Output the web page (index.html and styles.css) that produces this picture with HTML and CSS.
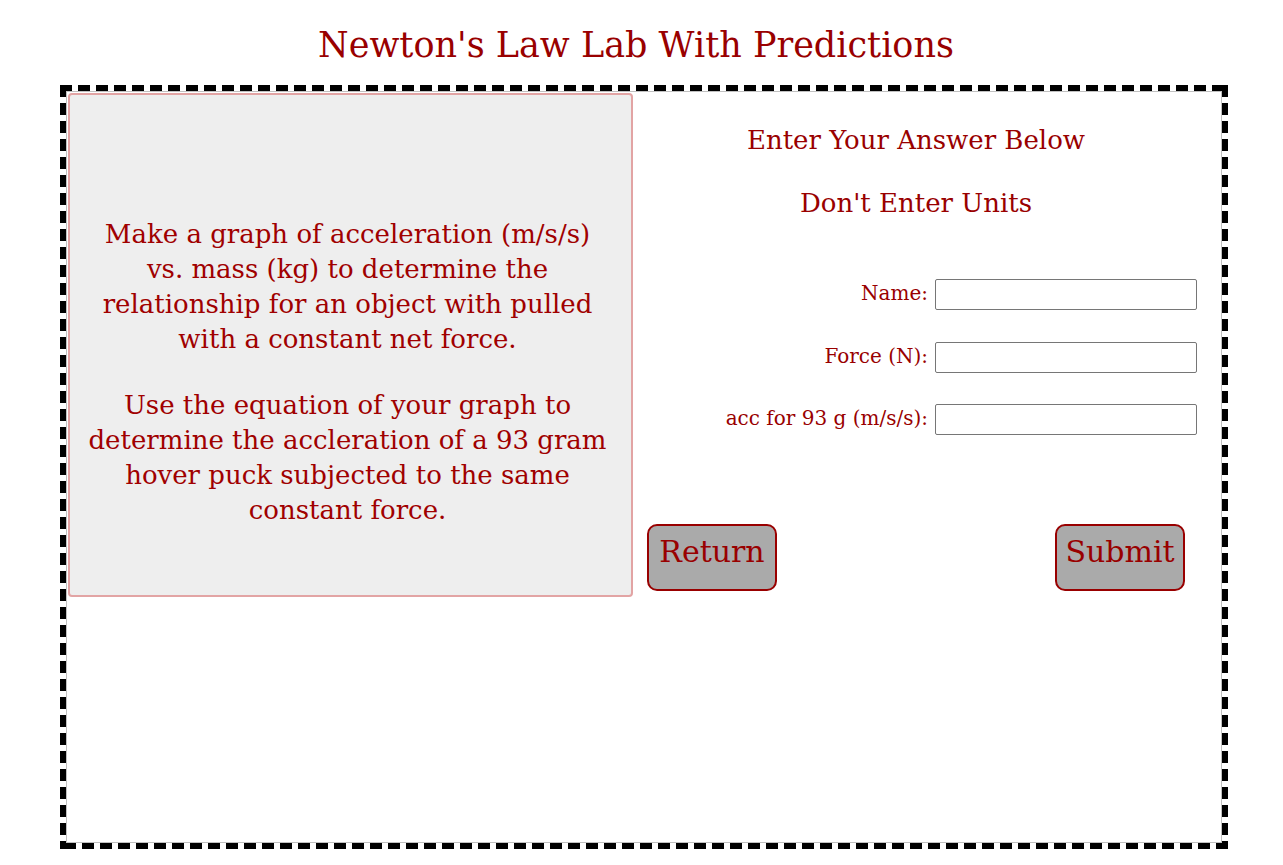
FILE: index.html
```html
<!DOCTYPE html>
<html lang="en">
<head>
<meta charset="utf-8">
<title>Newton's Law Lab With Predictions</title>
<link rel="stylesheet" href="styles.css">
</head>
<body>
<h1 class="title">Newton's Law Lab With Predictions</h1>
<div class="frame">
  <div class="inner">
    <div class="prompt">
      <p class="para"><span class="ln">Make a graph of acceleration (m/s/s)</span><span class="ln">vs. mass (kg) to determine the</span><span class="ln">relationship for an object with pulled</span><span class="ln">with a constant net force.</span></p>
      <p class="para"><span class="ln">Use the equation of your graph to</span><span class="ln">determine the accleration of a 93 gram</span><span class="ln">hover puck subjected to the same</span><span class="ln">constant force.</span></p>
    </div>
    <div class="answer">
      <p class="head head-first">Enter Your Answer Below</p>
      <p class="head">Don't Enter Units</p>
      <div class="form">
        <div class="row"><label class="lbl" for="name">Name:</label><input class="field" id="name" type="text"></div>
        <div class="row"><label class="lbl" for="force">Force (N):</label><input class="field" id="force" type="text"></div>
        <div class="row"><label class="lbl" for="acc">acc for 93 g (m/s/s):</label><input class="field" id="acc" type="text"></div>
      </div>
      <div class="buttons">
        <button class="btn" type="button">Return</button>
        <button class="btn" type="button">Submit</button>
      </div>
    </div>
  </div>
</div>
</body>
</html>
```
FILE: styles.css
```css
html, body {
  margin: 0;
  padding: 0;
  background: #ffffff;
}
body {
  font-family: "DejaVu Serif", "Liberation Serif", serif;
  color: #990000;
}
.title {
  margin: 0;
  padding: 25px 11px 0 0;
  height: 60px;
  font-size: 35px;
  line-height: 40px;
  font-weight: normal;
  text-align: center;
  color: #990000;
}
.frame {
  box-sizing: border-box;
  margin-left: 60px;
  width: 1168px;
  height: 764px;
  padding: 6px;
  background:
    repeating-linear-gradient(90deg, #000 0 12px, transparent 12px 18px) left top / 100% 6px no-repeat,
    repeating-linear-gradient(270deg, #000 0 12px, transparent 12px 18px) left bottom / 100% 6px no-repeat,
    repeating-linear-gradient(180deg, #000 0 12px, transparent 12px 18px) left top / 6px 100% no-repeat,
    repeating-linear-gradient(180deg, #000 0 12px, transparent 12px 18px) right top / 6px 100% no-repeat;
}
.inner {
  box-sizing: border-box;
  height: 100%;
  border: 1px solid #c0c0c0;
  display: flex;
  align-items: flex-start;
}
.prompt {
  box-sizing: border-box;
  margin: 1px 0 0 1px;
  width: 565px;
  height: 504px;
  background: #eeeeee;
  border: 2px solid #e2a4a4;
  border-radius: 4px;
  padding: 122px 10px 0 4px;
  text-align: center;
  font-size: 26px;
  line-height: 35px;
  color: #a00000;
}
.para {
  margin: 0 0 31px 0;
}
.ln {
  display: block;
  white-space: nowrap;
}
.answer {
  width: 566px;
  display: flex;
  flex-direction: column;
}
.head {
  margin: 0;
  text-align: center;
  font-size: 26px;
  line-height: 30px;
  white-space: nowrap;
}
.head-first {
  margin: 33px 0 33px 0;
}
.form {
  margin-top: 61px;
  display: flex;
  flex-direction: column;
  gap: 31.5px;
}
.row {
  display: flex;
  align-items: center;
  justify-content: flex-end;
  gap: 7px;
  padding-right: 2px;
}
.lbl {
  font-size: 20px;
  line-height: 24px;
  padding-bottom: 3px;
  white-space: nowrap;
}
.field {
  box-sizing: border-box;
  width: 262px;
  height: 31px;
  margin: 0;
  border: 1px solid #767676;
  border-radius: 2px;
  background: #ffffff;
  padding: 1px 2px;
}
.buttons {
  margin-top: 89px;
  display: flex;
  justify-content: space-between;
  padding: 0 14px;
}
.btn {
  box-sizing: border-box;
  width: 130px;
  height: 67px;
  margin: 0;
  padding: 0 0 12px 0;
  background: #aaaaaa;
  border: 2px solid #990000;
  border-radius: 10px;
  font-family: "DejaVu Serif", "Liberation Serif", serif;
  font-size: 30px;
  color: #990000;
}
```
